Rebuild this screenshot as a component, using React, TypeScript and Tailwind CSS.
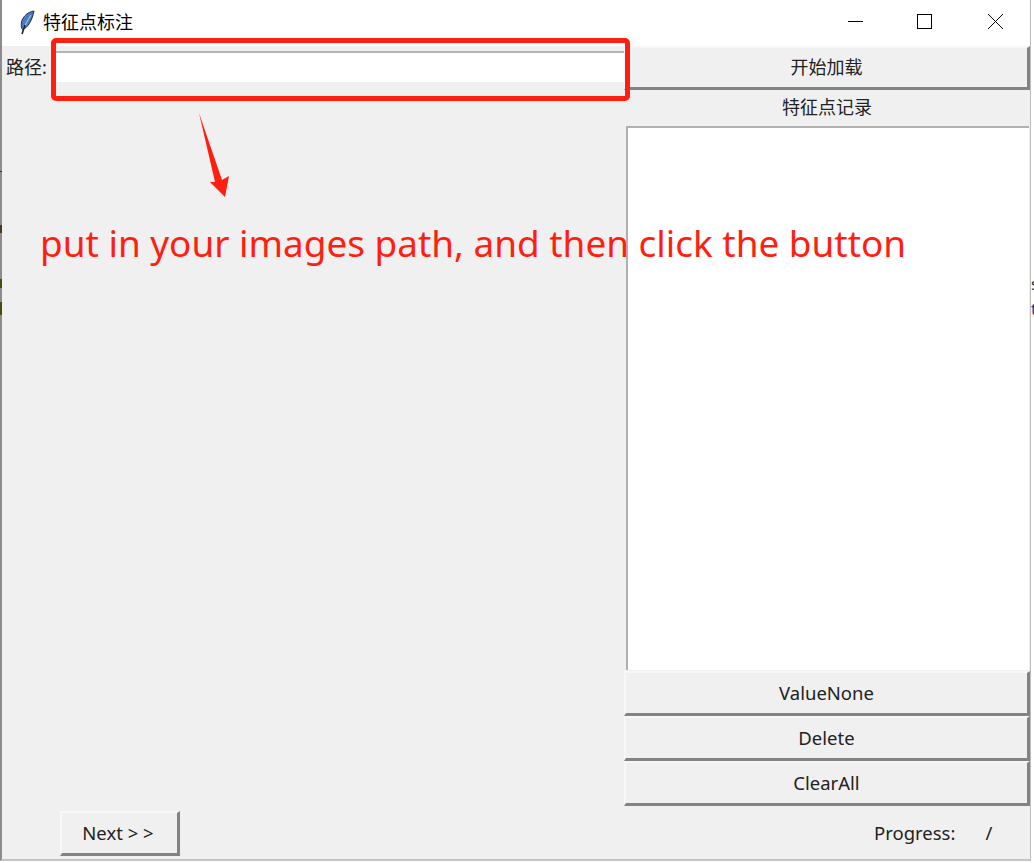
const cjk = "font-['Noto_Sans','Noto_Sans_CJK_SC',sans-serif]";

function TkButton({ label, className = "" }: { label: string; className?: string }) {
  return (
    <button
      className={`flex items-center justify-center bg-[#f0f0f0] border-t-2 border-l-2 border-t-[#f7f7f7] border-l-[#f7f7f7] border-b-[3px] border-r-[3px] border-b-[#838383] border-r-[#838383] text-[18.5px] text-[#222] ${className}`}
    >
      {label}
    </button>
  );
}

function Feather() {
  return (
    <svg width="18" height="26" viewBox="0 0 18 26">
      <path d="M16 1 C10 2 5 6 3.5 12 C3 15 3.2 18 4.5 19.5 C9.5 18 14 11 16 1 Z" fill="#4a7cc0" stroke="#1d2d4a" strokeWidth="1" />
      <path d="M13 5 C10 10 7 15 5 19" stroke="#b8cde8" strokeWidth="1" fill="none" />
      <path d="M7 15 L4 24" stroke="#1a2433" strokeWidth="1.6" fill="none" />
    </svg>
  );
}

export default function App() {
  return (
    <div className={`relative w-[1034px] h-[863px] overflow-hidden bg-white ${cjk}`}>
      {/* the window */}
      <div className="w-[1031px] h-[861px] flex flex-col border-l-2 border-r border-b-2 border-l-[#8c8c8c] border-r-[#bdbdbd] border-b-[#c4c4c4] bg-[#f0f0f0]">
        {/* title bar */}
        <div className="h-[46px] shrink-0 bg-white flex items-center pl-[16px]">
          <Feather />
          <span className="ml-[7px] text-[18px] leading-[24px] -mt-[2px] text-black">特征点标注</span>
          <div className="ml-auto flex items-center text-black">
            <svg width="70" height="46" viewBox="0 0 70 46">
              <path d="M28 21.5 H43" stroke="#000" strokeWidth="1" />
            </svg>
            <svg width="70" height="46" viewBox="0 0 70 46">
              <rect x="27.5" y="14.5" width="14" height="14" fill="none" stroke="#000" strokeWidth="1" />
            </svg>
            <svg width="70" height="46" viewBox="0 0 70 46">
              <path d="M28 14 L43 29 M43 14 L28 29" stroke="#000" strokeWidth="1" fill="none" />
            </svg>
          </div>
        </div>

        {/* body */}
        <div className="flex-1 flex min-h-0">
          {/* left column */}
          <div className="w-[622px] shrink-0 flex flex-col">
            <div className="flex items-start">
              <span className="w-[54px] shrink-0 pl-[4px] pt-[9px] text-[18px] leading-[24px] text-[#222] whitespace-nowrap">路径:</span>
              <div className="flex-1 mt-[5px] h-[31px] bg-white border-t-2 border-t-[#b4b4b4]" />
            </div>
            <div className="mt-auto h-[55px] pl-[58px] pb-[3px] flex items-end">
              <TkButton label="Next > >" className="w-[120px] h-[45px] pr-[3px]" />
            </div>
          </div>

          {/* right column */}
          <div className="flex-1 flex flex-col min-w-0">
            <TkButton label="开始加载" className="h-[44px] shrink-0 !text-[18px]" />
            <div className="h-[36px] shrink-0 flex items-center justify-center pb-[2px] text-[18px] text-[#222]">特征点记录</div>
            <div className="h-[544px] shrink-0 ml-[2px] mr-[1px] bg-white border-t-2 border-l-2 border-t-[#b0b0b0] border-l-[#b0b0b0]" />
            <div className="mt-[1px] flex flex-col">
              <TkButton label="ValueNone" className="h-[45px]" />
              <TkButton label="Delete" className="h-[45px]" />
              <TkButton label="ClearAll" className="h-[45px]" />
            </div>
            <div className="flex-1 flex items-center text-[18.5px] text-[#222]">
              <span className="ml-[250px]">Progress:</span>
              <span className="ml-[30px]">/</span>
            </div>
          </div>
        </div>
      </div>

      {/* annotations drawn on top */}
      <div className="absolute left-[51px] top-[38px] w-[579px] h-[63px] border-[5px] border-[#ff1f10] rounded-[5px]" />
      <svg className="absolute left-[195px] top-[110px]" width="40" height="90" viewBox="0 0 40 90">
        <path d="M4 3 L20 72 L15 72 L30 87 L34 66 L27 70 Z" fill="#ff1f10" />
      </svg>
      <span className="absolute left-[40px] top-[218px] text-[36.9px] leading-[50px] text-[#ff1f10] whitespace-nowrap">
        put in your images path, and then click the button
      </span>

      {/* bits of the desktop behind the window */}
      <span className="absolute left-[1031px] top-[274px] text-[16px] leading-[20px] text-[#333]">s</span>
      <span className="absolute left-[1031px] top-[299px] text-[16px] leading-[20px] text-[#223a8a]">t</span>
      <div className="absolute left-0 top-[171px] w-[2px] h-[1px] bg-[#4a2030]" />
      <div className="absolute left-0 top-[225px] w-[2px] h-[8px] bg-[#4a3a20]" />
      <div className="absolute left-0 top-[279px] w-[2px] h-[9px] bg-[#4a4a10]" />
      <div className="absolute left-0 top-[302px] w-[2px] h-[13px] bg-[#4a4a10]" />
    </div>
  );
}
